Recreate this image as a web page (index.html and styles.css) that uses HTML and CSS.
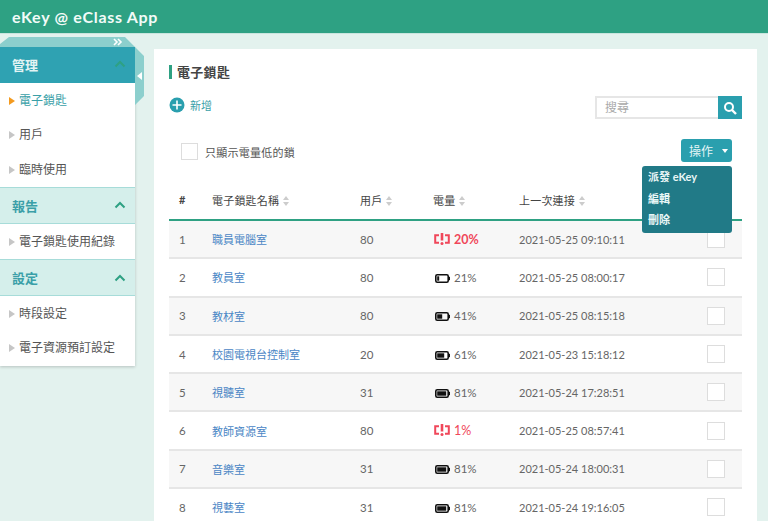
FILE: index.html
```html
<!DOCTYPE html>
<html lang="zh-Hant">
<head>
    <meta charset="UTF-8">
    <title>eKey @ eClass App</title>
    <link rel="stylesheet" href="styles.css">
</head>
<body>
    <header class="topbar">eKey @ eClass App</header>

    <div class="page">
        <aside class="sidebar">
            <svg class="side-tab" width="145" height="70" viewBox="0 0 145 70">
                <polygon points="0,7 9,0 125,0 135,10 144,19 144,59 135,68 135,10 0,10" fill="#8ccfcd"/>
                <path d="M114 2l3 3-3 3M118 2l3 3-3 3" fill="none" stroke="#fff" stroke-width="1.6"/>
                <polygon points="142,35 137,39 142,43" fill="#fff"/>
            </svg>

            <div class="side-head side-head-on">管理<svg class="chev" width="12" height="8" viewBox="0 0 12 8"><path d="M1.5 6.5L6 2l4.5 4.5" fill="none" stroke="#2ea183" stroke-width="2"/></svg></div>
            <ul class="side-list">
                <li class="current">電子鎖匙</li>
                <li>用戶</li>
                <li>臨時使用</li>
            </ul>
            <div class="side-head">報告<svg class="chev" width="12" height="8" viewBox="0 0 12 8"><path d="M1.5 6.5L6 2l4.5 4.5" fill="none" stroke="#2ea183" stroke-width="2"/></svg></div>
            <ul class="side-list">
                <li>電子鎖匙使用紀錄</li>
            </ul>
            <div class="side-head">設定<svg class="chev" width="12" height="8" viewBox="0 0 12 8"><path d="M1.5 6.5L6 2l4.5 4.5" fill="none" stroke="#2ea183" stroke-width="2"/></svg></div>
            <ul class="side-list">
                <li>時段設定</li>
                <li>電子資源預訂設定</li>
            </ul>
        </aside>

        <main class="card">
            <h1 class="title">電子鎖匙</h1>

            <div class="tools">
                <a class="add"><svg width="16" height="16" viewBox="0 0 16 16"><circle cx="8" cy="8" r="7.5" fill="#2a9fae"/><path d="M8 3.5v9M3.5 8h9" stroke="#fff" stroke-width="1.6"/></svg>新增</a>
                <div class="search">
                    <span class="search-input">搜尋</span>
                    <span class="search-btn"><svg width="14" height="14" viewBox="0 0 14 14"><circle cx="6" cy="6" r="4" fill="none" stroke="#fff" stroke-width="2"/><path d="M9 9l4 4" stroke="#fff" stroke-width="2.4"/></svg></span>
                </div>
            </div>

            <div class="filters">
                <label class="low-only"><span class="box"></span>只顯示電量低的鎖</label>
                <div class="actions">
                    <button class="action-btn">操作<span class="caret"></span></button>
                    <div class="menu">
                        <div>派發 eKey</div>
                        <div>編輯</div>
                        <div>刪除</div>
                    </div>
                </div>
            </div>

            <table class="locks">
                <thead>
                    <tr>
                        <th class="c-num">#</th>
                        <th class="c-name">電子鎖匙名稱<i class="sort"></i></th>
                        <th class="c-users">用戶<i class="sort"></i></th>
                        <th class="c-batt">電量<i class="sort"></i></th>
                        <th class="c-last">上一次連接<i class="sort"></i></th>
                        <th></th>
                    </tr>
                </thead>
                <tbody id="rows"></tbody>
            </table>
        </main>
    </div>

    <script>
        var locks = [
            ['職員電腦室', 80, 20, '2021-05-25 09:10:11'],
            ['教員室', 80, 21, '2021-05-25 08:00:17'],
            ['教材室', 80, 41, '2021-05-25 08:15:18'],
            ['校園電視台控制室', 20, 61, '2021-05-23 15:18:12'],
            ['視聽室', 31, 81, '2021-05-24 17:28:51'],
            ['教師資源室', 80, 1, '2021-05-25 08:57:41'],
            ['音樂室', 31, 81, '2021-05-24 18:00:31'],
            ['視藝室', 31, 81, '2021-05-24 19:16:05']
        ];

        function battery(level) {
            if (level <= 20) {
                return '<svg class="batt" width="16" height="12" viewBox="0 0 16 12">' +
                    '<path d="M5 2.2H1.2v7.6H5M11 2.2h3.8v7.6H11" fill="none" stroke="#f0475a" stroke-width="2"/>' +
                    '<path d="M8 0v7.5" stroke="#f0475a" stroke-width="2.6"/><circle cx="8" cy="10.4" r="1.5" fill="#f0475a"/></svg>';
            }
            var fill = Math.round(level / 81 * 9);
            return '<svg class="batt" width="15" height="9" viewBox="0 0 15 9">' +
                '<rect x="0.8" y="0.8" width="12.4" height="7.4" rx="1.4" fill="none" stroke="#111" stroke-width="1.6"/>' +
                '<rect x="13.6" y="2.8" width="1.4" height="3.4" fill="#111"/>' +
                '<rect x="2.2" y="2.3" width="' + fill + '" height="4.4" fill="#111"/></svg>';
        }

        var html = '';
        locks.forEach(function (l, i) {
            html += '<tr><td class="c-num">' + (i + 1) + '</td>' +
                '<td class="c-name"><a>' + l[0] + '</a></td>' +
                '<td class="c-users">' + l[1] + '</td>' +
                '<td class="c-batt' + (l[2] <= 20 ? ' low' : '') + '">' + battery(l[2]) + l[2] + '%</td>' +
                '<td class="c-last">' + l[3] + '</td>' +
                '<td class="c-check"><span class="box"></span></td></tr>';
        });
        document.getElementById('rows').innerHTML = html;
    </script>
</body>
</html>
```

FILE: styles.css
```css
html, body {
    margin: 0;
    padding: 0;
    height: 521px;
    overflow: hidden;
}
body {
    background: #e3f2ee;
    color: #555;
    font-family: Lato, "Noto Sans CJK TC", sans-serif;
    font-size: 12px;
}
.topbar {
    height: 33px;
    line-height: 33px;
    padding-left: 12px;
    background: #2ea183;
    border-bottom: 1px solid #c9e5de;
    color: #f2fbf8;
    font-size: 16px;
    font-weight: 700;
    letter-spacing: 0.7px;
}
.page {
    display: flex;
    align-items: flex-start;
}

/* sidebar */
.sidebar {
    position: relative;
    flex: none;
    width: 135px;
    margin-top: 13px;
    background: #fff;
    box-shadow: 0 1px 3px rgba(0, 0, 0, 0.2);
}
.side-tab {
    position: absolute;
    top: -10px;
    left: 0;
}
.side-head {
    position: relative;
    display: flex;
    justify-content: space-between;
    align-items: center;
    box-sizing: border-box;
    height: 37px;
    padding: 0 9px 0 12px;
    background: #d5efeb;
    border-top: 1px solid #a7dcd9;
    border-bottom: 1px solid #a7dcd9;
    color: #3a9fa8;
    font-size: 13px;
    font-weight: 700;
}
.side-head-on {
    height: 36px;
    padding-bottom: 2px;
    background: #2fa2b2;
    border: 0;
    color: #e3f4f4;
}
.side-list {
    list-style: none;
    margin: 0;
    padding: 1px 0 0;
}
.side-list li {
    position: relative;
    height: 34.3px;
    line-height: 34.3px;
    padding-left: 19px;
}
.side-list li::before {
    content: "";
    position: absolute;
    left: 9px;
    top: 13px;
    border-left: 6px solid #c6c6c6;
    border-top: 4px solid transparent;
    border-bottom: 4px solid transparent;
}
.side-list li.current {
    color: #3a9fa8;
}
.side-list li.current::before {
    border-left-color: #f39a1f;
}

/* card */
.card {
    box-sizing: border-box;
    width: 603px;
    height: 487px;
    margin: 15px 0 0 19px;
    padding: 13px 15px 0;
    background: #fff;
}
.title {
    margin: 0;
    padding-left: 8px;
    line-height: 20px;
    color: #444;
    font-size: 13px;
    font-weight: 700;
    background: linear-gradient(#2ea183, #2ea183) no-repeat 0 3px / 3px 14px;
    letter-spacing: 0.3px;
}
.tools {
    display: flex;
    justify-content: space-between;
    align-items: flex-start;
    margin-top: 14px;
}
.add {
    display: flex;
    align-items: center;
    gap: 5px;
    margin-top: 1px;
    color: #3a9fa8;
    font-size: 11px;
}
.search {
    display: flex;
    height: 23px;
}
.search-input {
    box-sizing: border-box;
    width: 123px;
    padding-left: 8px;
    line-height: 19px;
    border: 2px solid #e6e6e6;
    border-right: 0;
    color: #aaa;
}
.search-btn {
    display: flex;
    justify-content: center;
    align-items: center;
    width: 24px;
    background: #2a9fae;
}
.filters {
    display: flex;
    justify-content: space-between;
    align-items: flex-start;
    margin-top: 20px;
    padding: 0 10px 0 12px;
    height: 41px;
}
.low-only {
    display: flex;
    align-items: center;
    gap: 7px;
    margin-top: 4px;
    font-size: 11px;
    letter-spacing: 0.25px;
}
.box {
    display: block;
    box-sizing: border-box;
    width: 17px;
    height: 17px;
    background: #fff;
    border: 1px solid #ddd;
}
.actions {
    position: relative;
}
.action-btn {
    display: flex;
    align-items: center;
    gap: 9px;
    box-sizing: border-box;
    width: 51px;
    height: 23px;
    padding: 0 0 0 8px;
    background: #2a9fae;
    border: 0;
    border-radius: 3px;
    color: #e6f6f6;
    font-family: inherit;
    font-size: 12px;
}
.caret {
    border-top: 4px solid #fff;
    border-left: 3px solid transparent;
    border-right: 3px solid transparent;
}
.menu {
    position: absolute;
    z-index: 2;
    top: 27px;
    right: 0;
    width: 90px;
    box-sizing: border-box;
    padding: 0 6px 2px;
    background: #217a87;
    border-radius: 3px;
    color: #e9f6f6;
    font-size: 11px;
    font-weight: 700;
}
.menu div {
    line-height: 21.5px;
}

/* table */
.locks {
    width: 573px;
    table-layout: fixed;
    border-collapse: collapse;
}
.locks th {
    height: 39px;
    padding: 0;
    text-align: left;
    color: #444;
    font-size: 11px;
    font-weight: 400;
    border-bottom: 2px solid #2ea183;
    letter-spacing: 0.2px;
}
.locks td {
    height: 36.3px;
    padding: 0;
    border-bottom: 2px solid #e6e6e6;
    font-size: 11.5px;
    color: #666;
}
.locks tbody tr:nth-child(odd) {
    background: #f7f7f7;
}
.c-num {
    width: 33px;
    padding-left: 10px !important;
}
.locks th.c-num {
    font-weight: 700;
}
.c-name {
    width: 148px;
}
.c-name a {
    color: #4a86c5;
    font-size: 11px;
}
.c-users {
    width: 73px;
}
.c-batt {
    width: 86px;
}
.locks td.low {
    color: #f0475a;
    font-size: 12.5px;
}
.locks tr:first-child td.low {
    font-weight: 700;
}
.batt {
    vertical-align: -1px;
    margin: 0 4px 0 2px;
}
.low .batt {
    margin-left: 1px;
}
.c-last {
    width: 188px;
}
.locks td.c-last {
    font-size: 11px;
}
.c-check .box {
    width: 18px;
    height: 18px;
}
.sort {
    display: inline-block;
    position: relative;
    width: 7px;
    height: 10px;
    margin-left: 4px;
    vertical-align: -1px;
}
.sort::before, .sort::after {
    content: "";
    position: absolute;
    left: 0;
    border-left: 3.5px solid transparent;
    border-right: 3.5px solid transparent;
}
.sort::before {
    top: 0;
    border-bottom: 4px solid #ccc;
}
.sort::after {
    bottom: 0;
    border-top: 4px solid #ccc;
}
```
